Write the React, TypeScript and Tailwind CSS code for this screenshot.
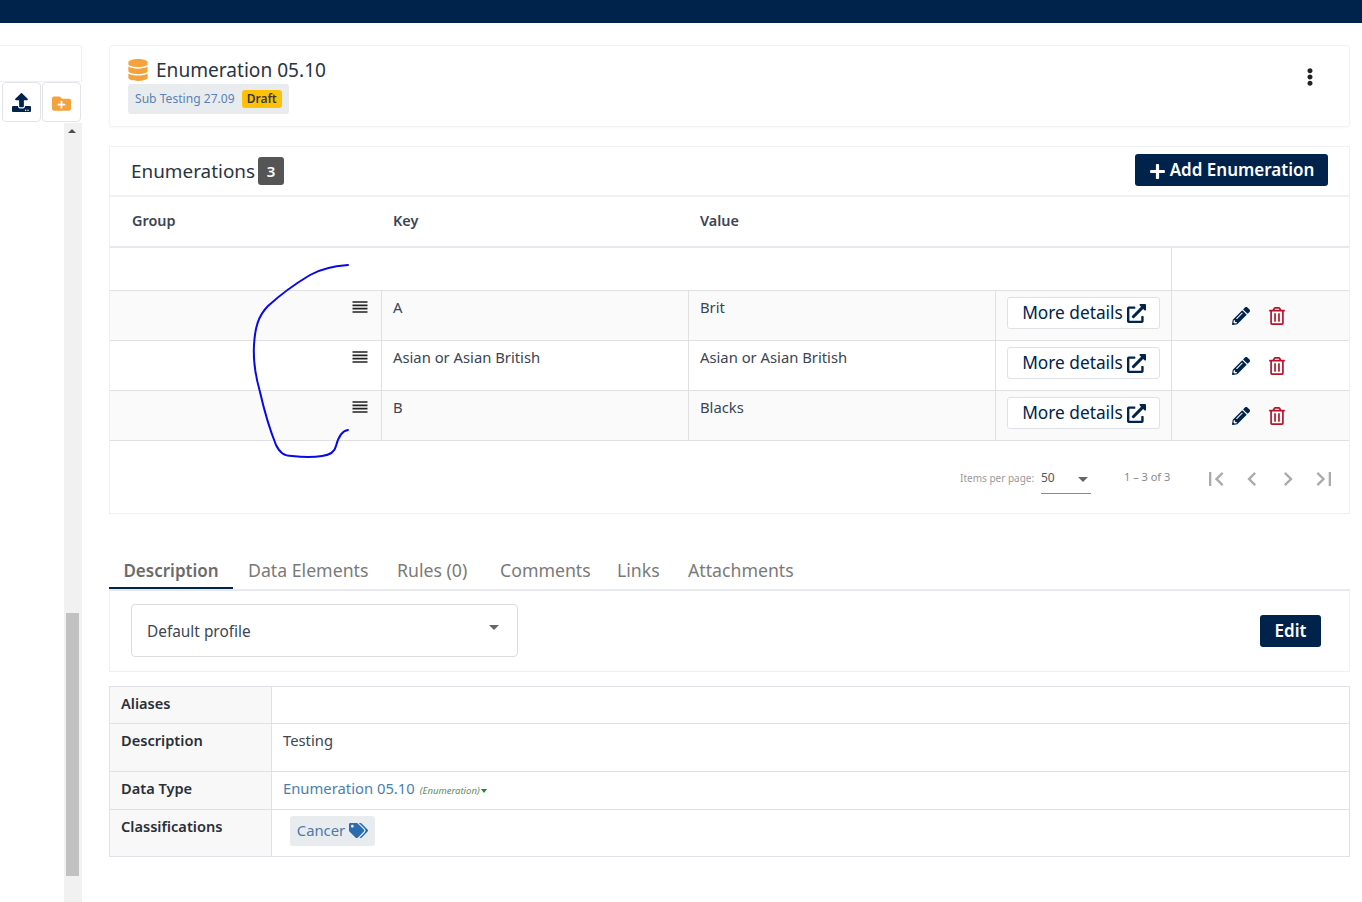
import React from 'react';
import { FaDatabase, FaUpload, FaFolderPlus, FaEllipsisV, FaPlus, FaExternalLinkAlt, FaPencilAlt, FaRegTrashAlt, FaTags } from 'react-icons/fa';
import { MdReorder } from 'react-icons/md';

const font = { fontFamily: '"Noto Sans", "Open Sans", sans-serif' };

const rows = [
  { key: 'A', value: 'Brit', striped: true },
  { key: 'Asian or Asian British', value: 'Asian or Asian British', striped: false },
  { key: 'B', value: 'Blacks', striped: true },
];

const tabs = [
  { label: 'Data Elements', width: 'w-[149px]' },
  { label: 'Rules (0)', width: 'w-[103px]' },
  { label: 'Comments', width: 'w-[117px]' },
  { label: 'Links', width: 'w-[71px]' },
  { label: 'Attachments', width: 'w-[120px]' },
];

function PageIcon({ d }: { d: string }) {
  return (
    <svg viewBox="0 0 24 24" className="w-7 h-7 fill-[#ababab]">
      <path d={d} />
    </svg>
  );
}

function EnumRow({ k, value, striped }: { k: string; value: string; striped: boolean }) {
  return (
    <div className={`flex h-[50px] border-b border-[#e0e0e0] text-[14.8px] text-[#3b4554] ${striped ? 'bg-[#fafafa]' : 'bg-white'}`}>
      <div className="w-[272px] flex justify-end pr-[11px] pt-[6px] border-r border-[#e0e0e0]">
        <MdReorder className="w-[20px] h-[20px] text-[#222]" />
      </div>
      <div className="w-[307px] pl-[11px] pt-[5px] border-r border-[#e0e0e0]">{k}</div>
      <div className="w-[307px] pl-[11px] pt-[5px] border-r border-[#e0e0e0]">{value}</div>
      <div className="w-[176px] pl-[11px] pt-[6px] border-r border-[#e0e0e0]">
        <button className="w-[153px] h-[32px] flex items-center justify-center gap-[4px] pl-[1px] rounded-[3px] border border-[#dee2e6] bg-white text-[17.3px] text-[#00234b]">
          More details <FaExternalLinkAlt className="w-[19px] h-[19px]" />
        </button>
      </div>
      <div className="flex-1 flex items-start pt-[16px] pl-[60px] gap-[19px]">
        <FaPencilAlt className="w-[18px] h-[18px] text-[#00234b]" />
        <FaRegTrashAlt className="w-[16px] h-[18px] text-[#b5152b]" />
      </div>
    </div>
  );
}

function InfoRow({ label, height, children }: { label: string; height: string; children?: React.ReactNode }) {
  return (
    <div className={`flex border-b border-[#dee2e6] last:border-b-0 ${height}`}>
      <div className="w-[162px] shrink-0 bg-[#f8f8f9] border-r border-[#dee2e6] pl-[11px] pt-[6px] text-[14.6px] font-semibold text-[#2a2f38]">{label}</div>
      <div className="flex-1 pl-[11px] pt-[5px] text-[14.8px] text-[#3b4554]">{children}</div>
    </div>
  );
}

export default function App() {
  return (
    <div className="h-[902px] w-[1362px] overflow-hidden bg-white flex flex-col" style={font}>
      <div className="h-[23px] bg-[#00234b] shrink-0" />
      <div className="flex flex-1 min-h-0">
        {/* Sidebar */}
        <div className="w-[82px] shrink-0 flex flex-col pt-[22px]">
          <div className="h-[37px] border border-l-0 border-[#f0f0f0] rounded-tr-[3px] shrink-0" />
          <div className="flex justify-end gap-[1px] h-[41px] shrink-0 pr-[1px]">
            <div className="w-[39px] h-[40px] border border-[#e3e4ea] rounded-[4px] flex items-center justify-center">
              <FaUpload className="w-[19px] h-[19px] text-[#00234b]" />
            </div>
            <div className="w-[39px] h-[40px] border border-[#e3e4ea] rounded-[4px] flex items-center justify-center pt-[3px] pr-[1px]">
              <FaFolderPlus className="w-[19px] h-[19px] text-[#f4a23e]" />
            </div>
          </div>
          <div className="flex-1 flex justify-end">
            <div className="w-[18px] bg-[#f1f1f1] flex flex-col items-center pt-[6px] pr-[2px]">
              <div className="w-0 h-0 border-x-[4px] border-x-transparent border-b-[4px] border-b-[#505050]" />
              <div className="w-[13px] h-[263px] bg-[#c1c1c1] mt-[480px]" />
            </div>
          </div>
        </div>

        {/* Main */}
        <div className="w-[1241px] ml-[27px] pt-[22px] relative">
          <div className="h-[82px] border border-[#f2f2f2] rounded-[3px] shadow-[0_1px_2px_rgba(0,0,0,0.03)] flex justify-between pl-[18px] pt-[11px] pr-[30px]">
            <div>
              <div className="flex items-center gap-[8px] h-[26px]">
                <FaDatabase className="w-[20px] h-[22px] text-[#f4a23e]" />
                <span className="text-[19.1px] text-[#2a3442] leading-none pt-[2px]">Enumeration 05.10</span>
              </div>
              <div className="mt-[1px] inline-flex items-center h-[30px] bg-[#e9ecef] rounded-[3px] pl-[7px] pr-[7px] gap-[7px]">
                <span className="text-[12.1px] text-[#5a82b4]">Sub Testing 27.09</span>
                <span className="h-[18px] px-[5px] bg-[#ffc107] rounded-[3px] text-[12px] font-semibold leading-[18px] text-[#343a40]">Draft</span>
              </div>
            </div>
            <FaEllipsisV className="w-[18px] h-[18px] mt-[11px] text-[#222]" />
          </div>

          <div className="mt-[19px] h-[368px] border border-[#f0f0f0] relative">
            <div className="h-[50px] border-b-2 border-[#f0f1f5] flex items-center justify-between pl-[21px] pr-[21px]">
              <div className="flex items-center gap-[3px]">
                <span className="text-[18.9px] text-[#2a3442]">Enumerations</span>
                <span className="w-[26px] h-[28px] bg-[#555] rounded-[3px] text-white text-[15px] font-semibold flex items-center justify-center">3</span>
              </div>
              <button className="h-[32px] w-[193px] -mt-[2px] bg-[#00234b] rounded-[3px] text-white text-[17px] font-semibold flex items-center justify-center gap-[4px]">
                <FaPlus className="w-[17px] h-[17px] mt-[3px]" /> Add Enumeration
              </button>
            </div>
            <div className="h-[51px] flex items-center pb-[2px] border-b-2 border-[#e8e9ee] text-[14.4px] font-semibold text-[#3b4554]">
              <div className="w-[283px] pl-[22px]">Group</div>
              <div className="w-[307px]">Key</div>
              <div>Value</div>
            </div>
            <div className="h-[43px] flex border-b border-[#e0e0e0]">
              <div className="w-[1062px] border-r border-[#e0e0e0]" />
            </div>
            {rows.map(r => (
              <EnumRow key={r.key} k={r.key} value={r.value} striped={r.striped} />
            ))}
            <div className="flex items-start pt-[28px] pl-[850px] text-[#8a8a8a] text-[11px]">
              <span className="w-[81px] mt-[2px] text-[#9a9a9a] text-[10px]">Items per page:</span>
              <div className="w-[50px] h-[25px] border-b border-[#8a8a8a] flex justify-between pr-[2px] text-[#555] text-[12px]">
                <span>50</span>
                <div className="w-0 h-0 mt-[8px] mr-[1px] border-x-[5px] border-x-transparent border-t-[5px] border-t-[#666]" />
              </div>
              <span className="ml-[33px] w-[77px] text-[11px]">1 – 3 of 3</span>
              <div className="flex gap-[8px] -mt-[4px] ml-[1px]">
                <PageIcon d="M18.41 16.59L13.82 12l4.59-4.59L17 6l-6 6 6 6zM6 6h2v12H6z" />
                <PageIcon d="M15.41 7.41L14 6l-6 6 6 6 1.41-1.41L10.83 12z" />
                <PageIcon d="M10 6L8.59 7.41 13.17 12l-4.58 4.59L10 18l6-6z" />
                <PageIcon d="M5.59 7.41L10.18 12l-4.59 4.59L7 18l6-6-6-6zM16 6h2v12h-2z" />
              </div>
            </div>
          </div>

          {/* Tabs */}
          <div className="mt-[39px] h-[36px] box-content flex border-b-2 border-[#e8e9ee] text-[17.7px] text-[#7a7a7a]">
            <div className="w-[124px] h-[36px] border-b-2 border-[#00234b] text-center font-semibold text-[17px] text-[#6b6b6b] pt-[5px]">Description</div>
            <div className="flex pl-[15px] pt-[4px]">
              {tabs.map(t => (
                <span key={t.label} className={t.width}>{t.label}</span>
              ))}
            </div>
          </div>
          <div className="h-[81px] border border-t-0 border-[#f0f0f0] flex justify-between pl-[21px] pr-[28px] pt-[13px]">
            <div className="w-[387px] h-[53px] border border-[#dcdcdc] rounded-[4px] flex justify-between pl-[15px] pr-[18px] pt-[15px] text-[15.4px] text-[#3b4554]">
              <span>Default profile</span>
              <div className="w-0 h-0 mt-[5px] border-x-[5px] border-x-transparent border-t-[5px] border-t-[#666]" />
            </div>
            <button className="mt-[11px] w-[61px] h-[32px] bg-[#00234b] rounded-[3px] text-white text-[17px] font-semibold">Edit</button>
          </div>

          {/* Details table */}
          <div className="mt-[14px] border border-[#dee2e6]">
            <InfoRow label="Aliases" height="h-[37px]" />
            <InfoRow label="Description" height="h-[48px]">Testing</InfoRow>
            <InfoRow label="Data Type" height="h-[38px]">
              <span className="text-[#4a7fb0]">Enumeration 05.10</span>
              <span className="ml-[5px] italic text-[9.5px] text-[#5b8c5a]">(Enumeration)</span>
              <span className="inline-block ml-[1px] mb-[1px] w-0 h-0 border-x-[3px] border-x-transparent border-t-[4px] border-t-[#1b8a3c]" />
            </InfoRow>
            <InfoRow label="Classifications" height="h-[46px]">
              <span className="ml-[7px] mt-[1px] h-[30px] w-[85px] rounded-[3px] bg-[#e9ecef] flex items-center justify-center gap-[4px] pb-[1px] text-[#4f79ab]">
                Cancer <FaTags className="w-[19px] h-[17px] text-[#2b6cb0]" />
              </span>
            </InfoRow>
          </div>

          {/* Hand-drawn annotation over the table */}
          <svg className="absolute left-0 top-0 pointer-events-none" width="400" height="480" viewBox="109 23 400 480" fill="none">
            <path
              d="M348 265C335 266 322 268 310 275C295 284 280 295 268 306C258 316 255 328 254 345C253 362 256 378 260 392C265 414 270 430 276 445C280 453 284 456 292 456C302 457 315 457 322 456C330 455 335 451 336 446C338 438 341 431 348 430"
              stroke="#0808e8"
              strokeWidth="2"
              strokeLinecap="round"
            />
          </svg>
        </div>
      </div>
    </div>
  );
}
